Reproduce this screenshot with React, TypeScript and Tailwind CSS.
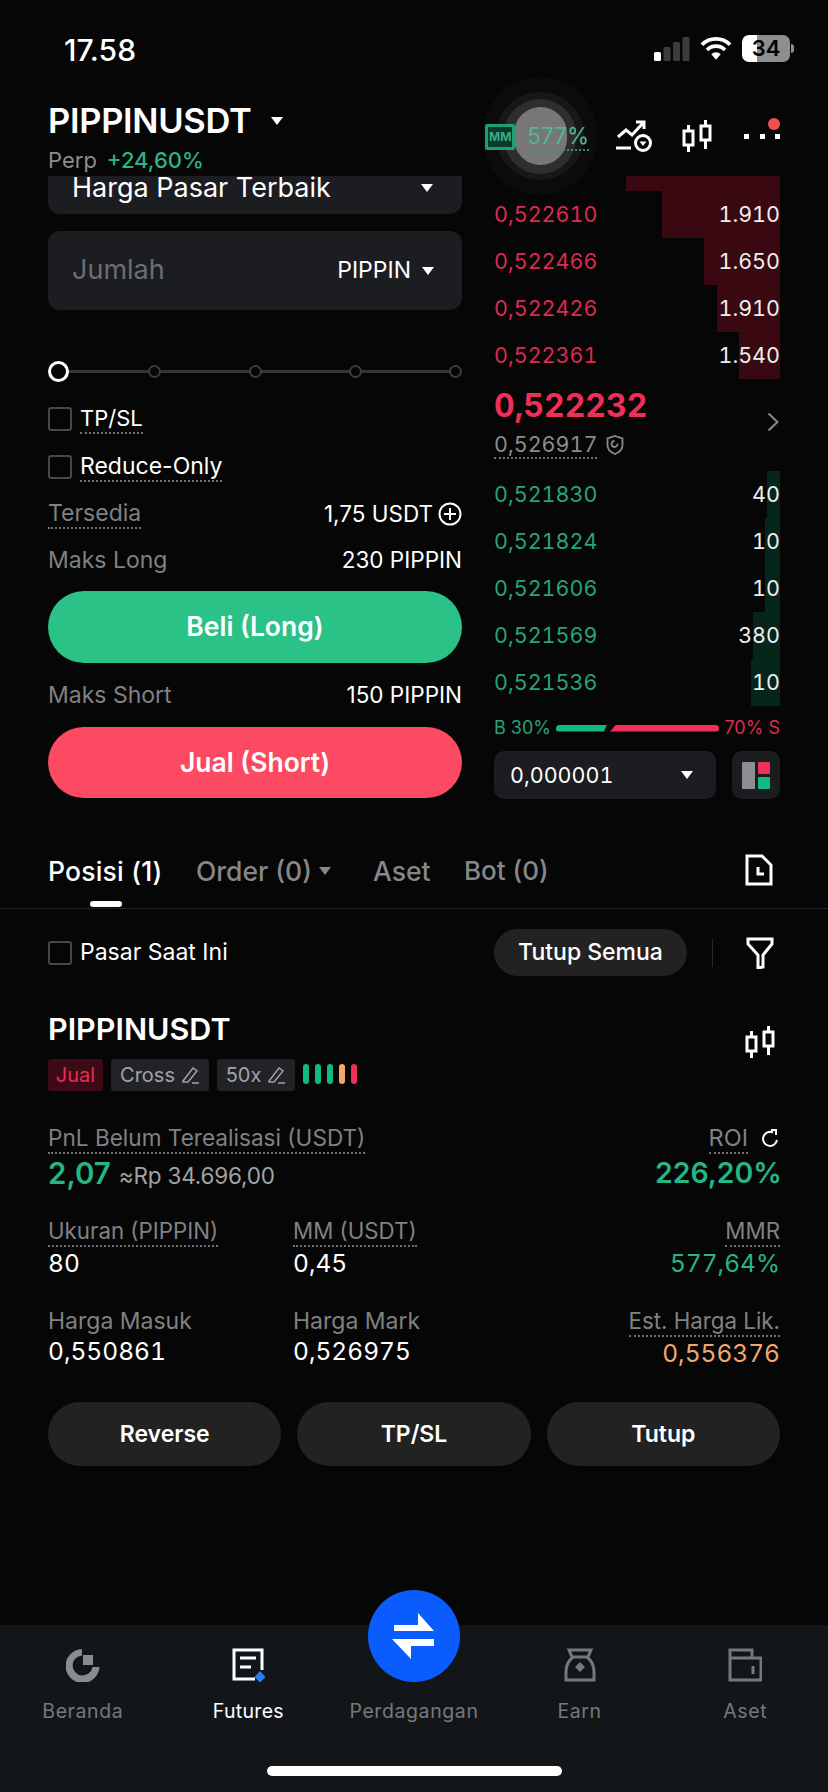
const font = { fontFamily: "Inter, 'Noto Sans', sans-serif" };

const asks = [
  { price: "0,522610", qty: "1.910", w: "w-[118px]" },
  { price: "0,522466", qty: "1.650", w: "w-[76px]" },
  { price: "0,522426", qty: "1.910", w: "w-[63px]" },
  { price: "0,522361", qty: "1.540", w: "w-[41px]" },
];
const bids = [
  { price: "0,521830", qty: "40", w: "w-[13px]" },
  { price: "0,521824", qty: "10", w: "w-[15px]" },
  { price: "0,521606", qty: "10", w: "w-[15px]" },
  { price: "0,521569", qty: "380", w: "w-[27px]" },
  { price: "0,521536", qty: "10", w: "w-[29px]" },
];

function Caret({ className = "" }: { className?: string }) {
  return (
    <svg width="14" height="10" viewBox="0 0 14 10" className={className}>
      <path d="M1 1h12L7 9z" fill="currentColor" />
    </svg>
  );
}

function Candles({ size = 30 }: { size?: number }) {
  return (
    <svg width={size} height={size + 3} viewBox="0 0 30 33" fill="none" stroke="white" strokeWidth="3">
      <rect x="2" y="11" width="9" height="14" />
      <path d="M6.500 5v6M6.500 25v7" />
      <rect x="19" y="6" width="9" height="14" />
      <path d="M23.500 0v6M23.500 20v9" />
    </svg>
  );
}

function Check() {
  return <span className="w-[24px] h-[24px] rounded-[3px] border-2 border-[#47484a] shrink-0" />;
}

function Pencil() {
  return (
    <svg width="18" height="18" viewBox="0 0 18 18" fill="none" stroke="#a1a2a5" strokeWidth="1.500">
      <path d="M1 15L11 2l4 3L6 16H1zM10 17h7" />
    </svg>
  );
}

function StatusBar() {
  return (
    <div className="h-[100px] flex justify-between pl-[64px] pr-[34px] pt-[30px] shrink-0">
      <span className="text-[30px] leading-[40px] font-medium text-white">17.58</span>
      <div className="flex items-start gap-[10px] pt-[6px]">
        <svg width="36" height="24" viewBox="0 0 36 24" className="mt-[1px]">
          <rect x="0" y="15" width="7" height="9" rx="1.500" fill="white" />
          <rect x="9.500" y="10" width="7" height="14" rx="1.500" fill="#3c3c3c" />
          <rect x="19" y="5" width="7" height="19" rx="1.500" fill="#3c3c3c" />
          <rect x="28.500" y="0" width="7" height="24" rx="1.500" fill="#3c3c3c" />
        </svg>
        <svg width="32" height="25" viewBox="0 0 34 26" fill="none" stroke="white" strokeWidth="4">
          <path d="M2 9a21 21 0 0 1 30 0M7.500 14.500a13 13 0 0 1 19 0" />
          <path d="M17 25l-5-6a7 7 0 0 1 10 0z" fill="white" stroke="none" />
        </svg>
        <div className="flex items-center -mt-[1px]">
          <div className="w-[48px] h-[27px] rounded-[7px] bg-[linear-gradient(90deg,#ffffff_0%,#ffffff_32%,#8e8e8e_32%,#8e8e8e_100%)] text-black text-[22px] leading-[27px] font-semibold text-center">
            34
          </div>
          <span className="w-[3px] h-[9px] ml-[1px] rounded-r-sm bg-[#8e8e8e]" />
        </div>
      </div>
    </div>
  );
}

function Header() {
  return (
    <div className="h-[76px] shrink-0 flex justify-between pl-[48px] pr-[48px] overflow-hidden">
      <div>
        <div className="flex items-center gap-[18px] h-[42px]">
          <span className="text-[34.500px] leading-[42px] font-semibold text-white tracking-[-0.3px]">PIPPINUSDT</span>
          <Caret className="text-white" />
        </div>
        <div className="flex gap-[10px] text-[22px] leading-[28px] mt-[4px]">
          <span className="text-[#8b8c8e]">Perp</span>
          <span className="text-[#2bb583] font-medium">+24,60%</span>
        </div>
      </div>
      <div className="flex items-start gap-[30px] pt-[20px]">
        <div className="flex items-center gap-[12px] w-[104px] -mr-[3px] mt-[3px] z-10">
          <span className="w-[32px] h-[26px] border-[3px] border-[#1f9d74] bg-[#0a3a2c] text-[#39a985] text-[12px] leading-[20px] font-bold text-center rounded-[2px]">
            MM
          </span>
          <span className="text-[#53b596] text-[22.500px] leading-[26px] border-b-2 border-dotted border-[#3f8d74]">577%</span>
        </div>
        <svg width="36" height="32" viewBox="0 0 36 32" fill="none" stroke="white" strokeWidth="3">
          <path d="M2 17l8-7 6 5L28 2M20 2h8v7" />
          <path d="M0 28h15" />
          <circle cx="27" cy="23" r="7.500" />
          <path d="M23.500 21.500h7L27 26z" fill="white" stroke="none" />
        </svg>
        <Candles />
        <div className="relative w-[36px] h-[32px] ml-[2px]">
          <div className="absolute left-0 right-0 top-[14px] flex justify-between">
            <span className="w-[5px] h-[5px] bg-white" />
            <span className="w-[5px] h-[5px] bg-white" />
            <span className="w-[5px] h-[5px] bg-white" />
          </div>
          <span className="absolute right-0 -top-[2px] w-[12px] h-[12px] rounded-full bg-[#f0524b]" />
        </div>
      </div>
    </div>
  );
}

function OrderForm() {
  return (
    <div className="w-[414px] shrink-0 flex flex-col">
      <div className="h-[38px] rounded-b-[12px] bg-[#1b1d20] flex items-start justify-between pl-[24px] pr-[28px] overflow-hidden">
        <span className="text-[27px] leading-[24px] text-white">Harga Pasar Terbaik</span>
        <Caret className="text-white mt-[7px]" />
      </div>
      <div className="h-[79px] mt-[17px] rounded-[12px] bg-[#1b1d20] flex items-center justify-between pl-[24px] pr-[27px]">
        <span className="text-[27px] text-[#6c6e71]">Jumlah</span>
        <span className="flex items-center gap-[10px] text-[23px] text-white">
          PIPPIN <Caret className="text-white" />
        </span>
      </div>
      <div className="relative h-[20px] mt-[51px] flex items-center justify-between">
        <div className="absolute left-0 right-0 h-[3px] bg-[#333436]" />
        <span className="relative w-[21px] h-[21px] -mr-[8px] rounded-full border-[3px] border-white bg-[#060606]" />
        <span className="relative w-[13px] h-[13px] rounded-full border-2 border-[#3b3c3e] bg-[#060606]" />
        <span className="relative w-[13px] h-[13px] rounded-full border-2 border-[#3b3c3e] bg-[#060606]" />
        <span className="relative w-[13px] h-[13px] rounded-full border-2 border-[#3b3c3e] bg-[#060606]" />
        <span className="relative w-[13px] h-[13px] rounded-full border-2 border-[#3b3c3e] bg-[#060606]" />
      </div>
      <div className="flex items-center gap-[8px] h-[28px] mt-[24px]">
        <Check />
        <span className="text-[22px] leading-[27px] text-white border-b-2 border-dotted border-[#6f7072]">TP/SL</span>
      </div>
      <div className="flex items-center gap-[8px] h-[28px] mt-[20px]">
        <Check />
        <span className="text-[23px] leading-[27px] text-white border-b-2 border-dotted border-[#6f7072]">Reduce-Only</span>
      </div>
      <div className="flex items-center justify-between h-[28px] mt-[19px]">
        <span className="text-[23px] leading-[27px] text-[#808183] border-b-2 border-dotted border-[#6f7072]">Tersedia</span>
        <span className="flex items-center gap-[6px] text-[22.500px] text-white">
          1,75 USDT
          <svg width="24" height="24" viewBox="0 0 24 24" fill="none" stroke="white" strokeWidth="2" className="-ml-[1px]">
            <circle cx="12" cy="12" r="10.500" />
            <path d="M12 6v12M6 12h12" />
          </svg>
        </span>
      </div>
      <div className="flex items-center justify-between h-[28px] mt-[18px]">
        <span className="text-[23px] text-[#808183]">Maks Long</span>
        <span className="text-[22.500px] text-white">230 PIPPIN</span>
      </div>
      <button className="h-[72px] mt-[17px] rounded-full bg-[#2bc287] text-white text-[26.500px] font-semibold">Beli (Long)</button>
      <div className="flex items-center justify-between h-[28px] mt-[18px]">
        <span className="text-[23px] text-[#808183]">Maks Short</span>
        <span className="text-[22.500px] text-white">150 PIPPIN</span>
      </div>
      <button className="h-[71px] mt-[18px] rounded-full bg-[#fb4a61] text-white text-[26.500px] font-semibold">Jual (Short)</button>
    </div>
  );
}

function Row({ price, qty, w, ask }: { price: string; qty: string; w: string; ask?: boolean }) {
  return (
    <div className="relative h-[47px] flex items-center justify-between text-[21.500px] tabular-nums">
      <div className={`absolute right-0 top-0 bottom-0 ${w} ${ask ? "bg-[#3a0810]" : "bg-[#06251b]"}`} />
      <span className={`relative ${ask ? "text-[#dd2a50]" : "text-[#26a378]"}`}>{price}</span>
      <span className="relative text-[#eeeeee]">{qty}</span>
    </div>
  );
}

function OrderBook() {
  return (
    <div className="flex-1 flex flex-col">
      <div className="h-[15px] ml-auto w-[154px] bg-[#3a0810]" />
      {asks.map((r) => (
        <Row key={r.price} {...r} ask />
      ))}
      <div className="relative h-[92px] shrink-0">
        <div className="text-[32px] leading-[40px] font-bold text-[#f02f58] mt-[7px] tabular-nums">0,522232</div>
        <div className="flex items-center gap-[9px] mt-[5px]">
          <span className="text-[21.500px] leading-[26px] text-[#8a8b8d] border-b-2 border-dotted border-[#6f7072] tabular-nums">0,526917</span>
          <svg width="18" height="20" viewBox="0 0 18 20" fill="none" stroke="#8a8b8d" strokeWidth="1.800">
            <path d="M9 1l7.500 2.500V10c0 4.500-3.500 7.500-7.500 9-4-1.500-7.500-4.500-7.500-9V3.500z" />
            <path d="M11.500 8.500a3 3 0 1 1-3-2.500" />
          </svg>
        </div>
        <svg width="12" height="20" viewBox="0 0 12 20" fill="none" stroke="#8a8b8d" strokeWidth="2" className="absolute right-[1px] top-[33px]">
          <path d="M1.500 1.500L10.500 10l-9 8.500" />
        </svg>
      </div>
      {bids.map((r) => (
        <Row key={r.price} {...r} />
      ))}
      <div className="flex items-center h-[24px] mt-[10px] text-[18px] leading-[24px] justify-between">
        <span className="text-[#26a378]">B 30%</span>
        <div className="flex-1 flex items-center gap-[3px] mx-[5px]">
          <span className="w-[51px] h-[7px] rounded-l-full bg-[#12b981] [clip-path:polygon(0_0,100%_0,94%_100%,0_100%)]" />
          <span className="flex-1 h-[7px] rounded-r-full bg-[#f02f58] [clip-path:polygon(6px_0,100%_0,100%_100%,0_100%)]" />
        </div>
        <span className="text-[#dd2a50]">70% S</span>
      </div>
      <div className="flex gap-[16px] mt-[11px]">
        <div className="w-[222px] h-[48px] rounded-[10px] bg-[#1b1d20] flex items-center justify-between pl-[16px] pr-[22px]">
          <span className="text-[21.500px] text-white tabular-nums">0,000001</span>
          <Caret className="text-white" />
        </div>
        <div className="w-[48px] h-[48px] rounded-[10px] bg-[#1b1d20] flex items-center justify-center">
          <svg width="30" height="30" viewBox="0 0 30 30">
            <rect x="1" y="2" width="13" height="27" rx="1" fill="#8d8e90" />
            <rect x="17" y="2" width="12" height="12" rx="1" fill="#f02f58" />
            <rect x="17" y="17" width="12" height="12" rx="1" fill="#12b981" />
          </svg>
        </div>
      </div>
    </div>
  );
}

function Tabs() {
  return (
    <div className="relative h-[55px] mt-[55px] border-b border-[#232425] flex items-start pl-[48px] pr-[55px] text-[26.500px] leading-[34px] text-[#86878a] shrink-0">
      <span className="relative text-white font-medium w-[148px] tracking-[0.2px]">
        Posisi (1)
        <span className="absolute left-[42px] top-[47px] w-[32px] h-[6px] rounded-full bg-white" />
      </span>
      <span className="flex items-center gap-[6px] w-[177px] font-medium">
        Order (0) <Caret className="text-[#86878a]" />
      </span>
      <span className="w-[91px] font-medium">Aset</span>
      <span className="font-medium text-[26px]">Bot (0)</span>
      <svg width="28" height="32" viewBox="0 0 28 32" fill="none" stroke="white" strokeWidth="3" className="ml-auto">
        <path d="M2 2h15l9 9v19H2z" />
        <path d="M13 13v7h6" />
      </svg>
    </div>
  );
}

function Stat({ label, value, right, tone, dotted, labelClass = "text-[22.300px]" }: { label: string; value: string; right?: boolean; tone?: string; dotted?: boolean; labelClass?: string }) {
  return (
    <div className={`flex flex-col ${right ? "items-end" : "items-start"}`}>
      <span className={`${labelClass} leading-[28px] text-[#808183] ${dotted ? "border-b-2 border-dotted border-[#6f7072]" : ""}`}>{label}</span>
      <span className={`leading-[32px] tabular-nums text-[24.500px] ${tone ?? "text-white"}`}>{value}</span>
    </div>
  );
}

function Position() {
  return (
    <div className="px-[48px] flex-1">
      <div className="flex items-center justify-between h-[47px] mt-[20px]">
        <div className="flex items-center gap-[8px]">
          <Check />
          <span className="text-[23px] text-white">Pasar Saat Ini</span>
        </div>
        <div className="flex items-center">
          <span className="w-[193px] h-[47px] rounded-full bg-[#222222] text-white text-[23px] leading-[47px] text-center font-medium">Tutup Semua</span>
          <span className="w-[1px] h-[28px] ml-[25px] mr-[33px] bg-[#2a2a2a]" />
          <svg width="28" height="32" viewBox="0 0 28 32" fill="none" stroke="white" strokeWidth="3" className="mr-[6px]">
            <path d="M2 2h24v5l-9 11v12l-5 1V18L2 7z" />
          </svg>
        </div>
      </div>
      <div className="flex justify-between mt-[34px]">
        <div>
          <div className="text-[30.500px] leading-[38px] font-semibold text-white">PIPPINUSDT</div>
          <div className="flex items-center gap-[8px] mt-[11px] text-[20px]">
            <span className="w-[55px] h-[32px] rounded-[3px] bg-[#3d0a15] text-[#e42f54] leading-[32px] text-center">Jual</span>
            <span className="w-[98px] h-[32px] rounded-[3px] bg-[#212327] text-[#a1a2a5] flex items-center justify-center gap-[7px]">
              Cross
              <Pencil />
            </span>
            <span className="w-[78px] h-[32px] rounded-[3px] bg-[#212327] text-[#a1a2a5] flex items-center justify-center gap-[7px]">
              50x
              <Pencil />
            </span>
            <div className="flex gap-[6px] mb-[2px]">
              <span className="w-[6px] h-[20px] rounded-full bg-[#12b981]" />
              <span className="w-[6px] h-[20px] rounded-full bg-[#12b981]" />
              <span className="w-[6px] h-[20px] rounded-full bg-[#12b981]" />
              <span className="w-[6px] h-[20px] rounded-full bg-[#f2a76f]" />
              <span className="w-[6px] h-[20px] rounded-full bg-[#f02f58]" />
            </div>
          </div>
        </div>
        <div className="mt-[16px] mr-[5px]">
          <Candles />
        </div>
      </div>
      <div className="flex justify-between mt-[33px]">
        <div>
          <span className="text-[22.600px] leading-[28px] text-[#808183] border-b-2 border-dotted border-[#6f7072] block">PnL Belum Terealisasi (USDT)</span>
          <div className="flex items-baseline gap-[8px] mt-[1px]">
            <span className="text-[29.500px] leading-[36px] font-semibold text-[#26b585]">2,07</span>
            <span className="text-[22.500px] text-[#a1a2a5] tracking-[-0.2px]">≈Rp 34.696,00</span>
          </div>
        </div>
        <div className="flex flex-col items-end -mr-[2px]">
          <div className="flex items-center gap-[12px] mr-[2px]">
            <span className="text-[23.500px] leading-[28px] text-[#808183] border-b-2 border-dotted border-[#6f7072]">ROI</span>
            <svg width="20" height="20" viewBox="0 0 20 20" fill="none" stroke="white" strokeWidth="2">
              <path d="M17 11a7 7 0 1 1-4-7.500M11 1h5v5" />
            </svg>
          </div>
          <span className="text-[28.500px] leading-[38px] font-semibold text-[#26b585]">226,20%</span>
        </div>
      </div>
      <div className="grid grid-cols-[245px_1fr_1fr] mt-[24px]">
        <Stat label="Ukuran (PIPPIN)" value="80" dotted />
        <Stat label="MM (USDT)" value="0,45" dotted />
        <Stat label="MMR" value="577,64%" right dotted tone="text-[#26b585]" />
      </div>
      <div className="grid grid-cols-[245px_1fr_1fr] mt-[28px]">
        <Stat label="Harga Masuk" value="0,550861" labelClass="text-[23px]" />
        <Stat label="Harga Mark" value="0,526975" labelClass="text-[23px]" />
        <Stat label="Est. Harga Lik." value="0,556376" right dotted tone="text-[#f2a76f]" />
      </div>
      <div className="grid grid-cols-3 gap-[16px] mt-[33px]">
        {["Reverse", "TP/SL", "Tutup"].map((t) => (
          <button key={t} className="h-[64px] rounded-full bg-[#222222] text-white text-[23px] font-semibold">
            {t}
          </button>
        ))}
      </div>
    </div>
  );
}

function BottomNav() {
  const muted = "text-[19.500px] leading-[26px] text-[#77787a] tracking-[0.6px] mt-[16px]";
  return (
    <div className="relative h-[167px] shrink-0 bg-[#131619]">
      <div className="absolute left-[368px] -top-[35px] w-[92px] h-[92px] rounded-full bg-[#0a5cff] flex items-center justify-center">
        <svg width="44" height="46" viewBox="0 0 44 46" fill="white">
          <path d="M2 18h40L26 0v12H2zM0 26h42v7H19v13z" />
        </svg>
      </div>
      <div className="grid grid-cols-5 pt-[23px]">
        <div className="flex flex-col items-center">
          <svg width="34" height="34" viewBox="0 0 34 34" fill="none">
            <path d="M16 1v6.500A10 10 0 1 0 26.500 19H33.500A17 17 0 1 1 16 1z" fill="#8a8b8d" />
            <rect x="17" y="7" width="10" height="10" fill="#8a8b8d" />
          </svg>
          <span className={muted}>Beranda</span>
        </div>
        <div className="flex flex-col items-center">
          <svg width="34" height="34" viewBox="0 0 34 34" fill="none">
            <path d="M31 22V2H3v29h21" stroke="white" strokeWidth="3" />
            <path d="M9 10h16M9 19h11" stroke="white" strokeWidth="3" />
            <path d="M29 23l5.500 6-5.500 5.500-5.500-5.500z" fill="#2f7bf2" />
          </svg>
          <span className="text-[19.500px] leading-[26px] text-white mt-[16px] tracking-[0.3px]">Futures</span>
        </div>
        <div className="flex flex-col items-center pt-[34px]">
          <span className={muted}>Perdagangan</span>
        </div>
        <div className="flex flex-col items-center">
          <svg width="34" height="34" viewBox="0 0 34 34" fill="none" stroke="#77787a" strokeWidth="3">
            <path d="M6 2h22l-3 7H9zM10 9C5 13 3 18 3 24v8h28v-8c0-6-2-11-7-15" />
            <path d="M17 14l5 5-5 5-5-5z" fill="#77787a" stroke="none" />
          </svg>
          <span className={muted}>Earn</span>
        </div>
        <div className="flex flex-col items-center">
          <svg width="34" height="34" viewBox="0 0 34 34" fill="none" stroke="#77787a" strokeWidth="3">
            <path d="M2 32V2h22v8h9v22zM2 10h22" />
            <path d="M25 18v8" />
          </svg>
          <span className={muted}>Aset</span>
        </div>
      </div>
      <div className="absolute left-[267px] top-[141px] w-[295px] h-[10px] rounded-full bg-white" />
    </div>
  );
}

export default function App() {
  return (
    <div style={font} className="relative w-[828px] h-[1792px] bg-[#060606] overflow-hidden flex flex-col">
      <StatusBar />
      <Header />
      <div className="flex gap-[32px] pl-[48px] pr-[48px] shrink-0">
        <OrderForm />
        <OrderBook />
      </div>
      <Tabs />
      <Position />
      <BottomNav />
      {/* floating assistive touch, over the header */}
      <div className="absolute left-[483px] top-[77px] w-[114px] h-[118px] rounded-full bg-[#ffffff]/[0.025] flex items-center justify-center pointer-events-none">
        <div className="w-[88px] h-[88px] rounded-full bg-[#ffffff]/[0.05] flex items-center justify-center">
          <div className="w-[72px] h-[75px] rounded-full bg-[#ffffff]/[0.1] flex items-center justify-center">
            <div className="w-[53px] h-[58px] rounded-full bg-[#ffffff]/[0.35]" />
          </div>
        </div>
      </div>
    </div>
  );
}
